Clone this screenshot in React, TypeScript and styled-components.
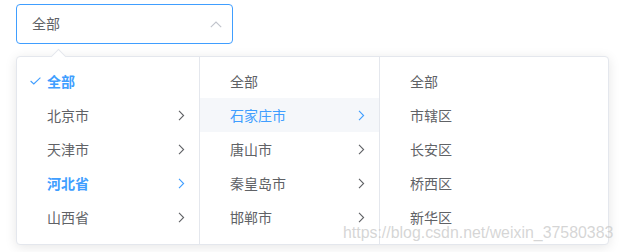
import styled, { createGlobalStyle } from 'styled-components';

const GlobalStyle = createGlobalStyle`
  body {
    margin: 0;
    background: #fff;
    font-family: "Helvetica Neue", "Liberation Sans", "Noto Sans CJK SC", sans-serif;
  }
`;

type Item = { label: string; children?: boolean; active?: boolean; bold?: boolean; hover?: boolean; checked?: boolean };

const columns: Item[][] = [
  [
    { label: '全部', active: true, bold: true, checked: true },
    { label: '北京市', children: true },
    { label: '天津市', children: true },
    { label: '河北省', children: true, active: true, bold: true },
    { label: '山西省', children: true },
  ],
  [
    { label: '全部' },
    { label: '石家庄市', children: true, active: true, hover: true },
    { label: '唐山市', children: true },
    { label: '秦皇岛市', children: true },
    { label: '邯郸市', children: true },
  ],
  [
    { label: '全部' },
    { label: '市辖区' },
    { label: '长安区' },
    { label: '桥西区' },
    { label: '新华区' },
  ],
];

const menuWidths = ['183px', '180px', 'auto'];

// COMPONENT chevron icons
const ArrowRight = () => (
  <svg width='7' height='11' viewBox='0 0 7 11'>
    <path d='M1 0.8 L5.6 5.5 L1 10.2' fill='none' stroke='currentColor' strokeWidth='1.1' />
  </svg>
);

const ArrowUp = () => (
  <svg width='12' height='7' viewBox='0 0 12 7'>
    <path d='M0.8 6.2 L6 1 L11.2 6.2' fill='none' stroke='#c0c4cc' strokeWidth='1.1' />
  </svg>
);

const CheckIcon = () => (
  <svg width='11' height='8' viewBox='0 0 11 8'>
    <path d='M0.6 4 L3.8 7 L10.4 0.6' fill='none' stroke='#409eff' strokeWidth='1.1' />
  </svg>
);

// COMPONENT cascader
const App = () => {
  return (
    <Page>
      <GlobalStyle />
      <Cascader.Input>
        <span>全部</span>
        <ArrowUp />
      </Cascader.Input>
      <Cascader.Panel>
        <Cascader.Arrow />
        {columns.map((col, ci) => (
          <Cascader.Menu key={ci} $width={menuWidths[ci]} $last={ci === 2}>
            {col.map((item) => (
              <Cascader.Node
                key={item.label}
                $active={!!item.active}
                $bold={!!item.bold}
                $hover={!!item.hover}
              >
                {item.checked && (
                  <Cascader.Check>
                    <CheckIcon />
                  </Cascader.Check>
                )}
                <span>{item.label}</span>
                {item.children && (
                  <Cascader.Postfix>
                    <ArrowRight />
                  </Cascader.Postfix>
                )}
              </Cascader.Node>
            ))}
          </Cascader.Menu>
        ))}
      </Cascader.Panel>
      <Watermark>https://blog.csdn.net/weixin_37580383</Watermark>
    </Page>
  );
};

// PARAM style
const Page = styled.div`
  position: relative;
  width: 624px;
  height: 252px;
  padding: 4px 16px 0;
  box-sizing: border-box;
`;

const Watermark = styled.div`
  position: absolute;
  left: 343px;
  top: 224px;
  font-family: "Liberation Sans", Arial, sans-serif;
  font-size: 15.9px;
  color: rgba(200, 200, 200, 0.75);
  white-space: nowrap;
`;

const Cascader = {
  Input: styled.div`
    width: 217px;
    height: 40px;
    box-sizing: border-box;
    border: 1px solid #409eff;
    border-radius: 4px;
    display: flex;
    align-items: center;
    justify-content: space-between;
    padding: 0 10px 0 15px;
    font-size: 14px;
    color: #606266;
    span {
      line-height: 1;
    }
  `,
  Panel: styled.div`
    position: relative;
    margin-top: 12px;
    width: 593px;
    height: 189px;
    box-sizing: border-box;
    border: 1px solid #e4e7ed;
    border-radius: 4px;
    background: #fff;
    box-shadow: 0 2px 12px 0 rgba(0, 0, 0, 0.1);
    display: flex;
  `,
  Arrow: styled.div`
    position: absolute;
    top: -6px;
    left: 36px;
    width: 10px;
    height: 10px;
    background: #fff;
    border-left: 1px solid #e4e7ed;
    border-top: 1px solid #e4e7ed;
    transform: rotate(45deg);
  `,
  Menu: styled.ul<{ $width: string; $last: boolean }>`
    margin: 0;
    list-style: none;
    padding: 7px 0 6px;
    box-sizing: border-box;
    width: ${({ $width }) => $width};
    flex: ${({ $last }) => ($last ? '1' : 'none')};
    border-right: ${({ $last }) => ($last ? 'none' : '1px solid #e4e7ed')};
    height: 100%;
  `,
  Node: styled.li<{ $active: boolean; $bold: boolean; $hover: boolean }>`
    position: relative;
    height: 34px;
    display: flex;
    align-items: center;
    padding: 0 30px 0 30px;
    font-size: 14px;
    color: ${({ $active }) => ($active ? '#409eff' : '#606266')};
    font-weight: ${({ $bold }) => ($bold ? 700 : 400)};
    background: ${({ $hover }) => ($hover ? '#f5f7fa' : 'transparent')};
  `,
  Check: styled.span`
    position: absolute;
    left: 13px;
    top: 13px;
    display: flex;
  `,
  Postfix: styled.span`
    position: absolute;
    right: 14px;
    top: 12px;
    display: flex;
  `,
};

export default App;
